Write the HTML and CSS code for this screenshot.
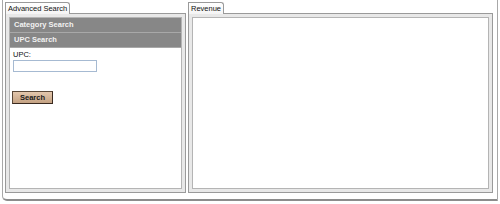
FILE: index.html
```html
<!DOCTYPE html>
<html>
<head>
    <link rel="stylesheet" href="styles.css">
</head>
<body>
    <div class="frame">
        <div class="pane left">
            <div class="tab">Advanced Search</div>
            <div class="panel">
                <div class="inner">
                    <div class="bar">Category Search</div>
                    <div class="bar">UPC Search</div>
                    <div class="form">
                        <label class="lbl">UPC:</label>
                        <input type="text" class="upc">
                        <button class="search">Search</button>
                    </div>
                </div>
            </div>
        </div>
        <div class="pane right">
            <div class="tab">Revenue</div>
            <div class="panel">
                <div class="inner"></div>
            </div>
        </div>
    </div>
</body>
</html>
```
FILE: styles.css
```css
body {
    margin: 0;
    padding: 0;
    background: #fff;
    font-family: 'Liberation Sans', Arial, sans-serif;
    font-size: 7.5px;
    color: #000;
}
.frame {
    margin-left: 2px;
    width: 488px;
    height: 192px;
    padding: 2px 4px 5px 2px;
    border-left: 1px solid #a8a8a8;
    border-right: 1px solid #a8a8a8;
    border-bottom: 2px solid #8c8c8c;
    border-bottom-left-radius: 5px;
    display: flex;
    gap: 1px;
}
.pane {
    display: flex;
    flex-direction: column;
}
.left {
    width: 181px;
}
.right {
    width: 305px;
    margin-left: 1px;
}
.tab {
    align-self: flex-start;
    position: relative;
    z-index: 1;
    height: 12px;
    line-height: 11px;
    padding: 0 2px;
    margin-bottom: -1px;
    color: #111;
    background: linear-gradient(#ffffff, #f4f4f4);
    border: 1px solid #9a9a9a;
    border-bottom: none;
    border-top-right-radius: 3px;
    box-sizing: border-box;
}
.panel {
    height: 180px;
    box-sizing: border-box;
    border: 1px solid #9a9a9a;
    background: #e8e8e8;
    padding: 3px;
}
.inner {
    height: 100%;
    box-sizing: border-box;
    border: 1px solid #b4b4b4;
    background: #fff;
}
.bar {
    height: 14px;
    line-height: 14px;
    padding-left: 4px;
    background: #878787;
    color: #f2f2f2;
    font-weight: bold;
    border-bottom: 1px solid #a8a8a8;
}
.form {
    padding: 2px 2px;
    display: flex;
    flex-direction: column;
    align-items: flex-start;
}
.lbl {
    line-height: 9px;
    margin-left: 1px;
    color: #111;
}
.upc {
    width: 84px;
    height: 12px;
    margin: 1px 0 0 1px;
    padding: 0;
    border: 1px solid #a6bad2;
    box-sizing: border-box;
}
.search {
    margin-top: 19px;
    width: 41px;
    height: 13px;
    padding: 0;
    font-family: 'Liberation Sans', Arial, sans-serif;
    font-size: 7.5px;
    font-weight: bold;
    color: #1a1a1a;
    background: linear-gradient(#e3c7ad, #c4a283);
    border: 1px solid #5a4838;
    border-right-color: #3a2a20;
    border-bottom-color: #3a2a20;
}
```
